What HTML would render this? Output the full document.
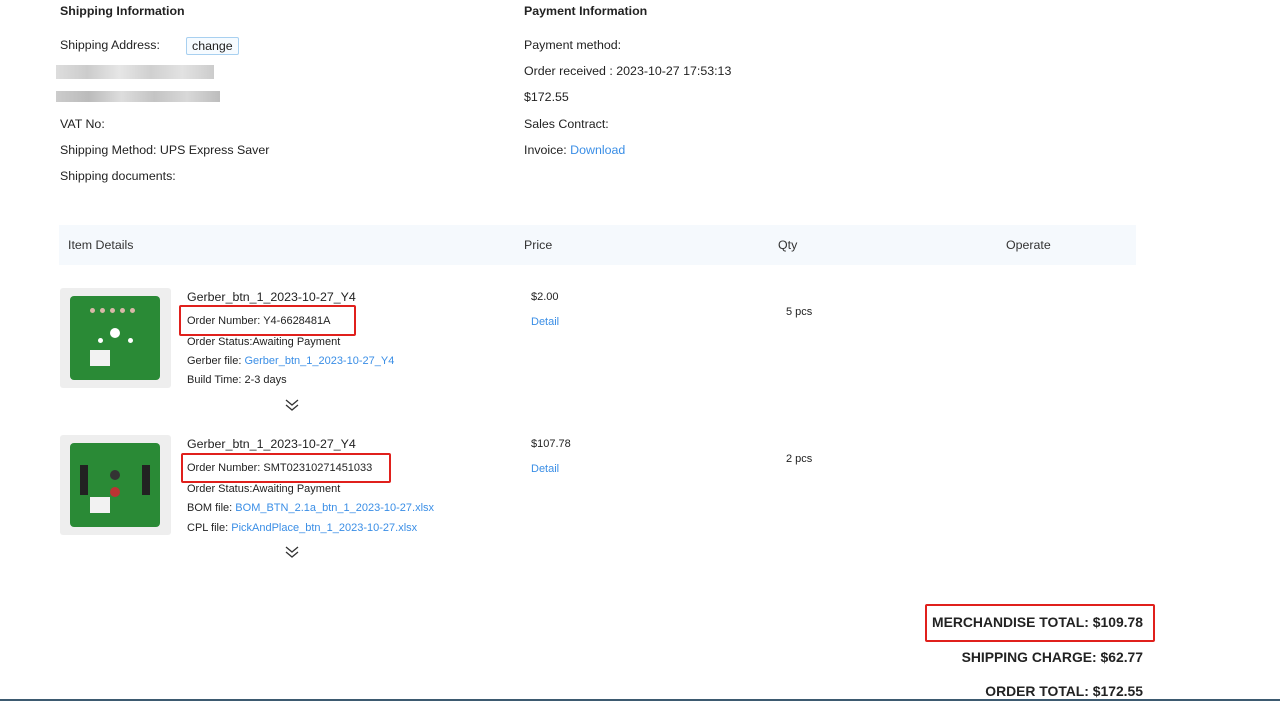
<!DOCTYPE html>
<html><head><meta charset="utf-8"><style>
body{margin:0;width:1280px;height:701px;background:#fff;font-family:"Liberation Sans",sans-serif;color:#222;position:relative;overflow:hidden}
.a{position:absolute;white-space:nowrap}
.t{font-size:12.4px}
.s{font-size:11px}
.b{font-weight:bold}
.l{color:#3a8ee6}
.box{position:absolute;border:2px solid #e0201c;border-radius:2px}
.pcb{position:absolute;width:111px;height:100px;background:#eee;border-radius:3px}
.pcb .g{position:absolute;left:10px;top:8px;width:90px;height:84px;background:#2a8a36;border-radius:4px}
.pcb .d{position:absolute;width:5px;height:5px;border-radius:50%;background:#d9b8a8}
.pcb .w{position:absolute;left:30px;top:62px;width:20px;height:16px;background:#f2f2f2}
.chev{position:absolute;width:14px;height:14px}
</style></head><body>
<div class="a t b" style="left:60px;top:4px">Shipping Information</div>
<div class="a t b" style="left:524px;top:4px">Payment Information</div>
<div class="a t" style="left:60px;top:38px">Shipping Address:</div>
<div class="a t" style="left:186px;top:37px;border:1px solid #a8d0f0;border-radius:2px;padding:1px 5px;background:#f6fbff">change</div>
<div class="a" style="left:56px;top:65px;width:158px;height:14px;background:linear-gradient(90deg,#ddd,#ccc,#e6e6e6,#d0d0d0,#e2e2e2,#ccc)"></div>
<div class="a" style="left:56px;top:91px;width:164px;height:11px;background:linear-gradient(90deg,#ccc,#bbb,#ddd,#c4c4c4,#d8d8d8,#bdbdbd)"></div>
<div class="a t" style="left:60px;top:117px">VAT No:</div>
<div class="a t" style="left:60px;top:143px">Shipping Method: UPS Express Saver</div>
<div class="a t" style="left:60px;top:169px">Shipping documents:</div>
<div class="a t" style="left:524px;top:38px">Payment method:</div>
<div class="a t" style="left:524px;top:64px">Order received : 2023-10-27 17:53:13</div>
<div class="a t" style="left:524px;top:90px">$172.55</div>
<div class="a t" style="left:524px;top:117px">Sales Contract:</div>
<div class="a t" style="left:524px;top:143px">Invoice: <span class="l">Download</span></div>

<div class="a" style="left:59px;top:225px;width:1077px;height:40px;background:#f5f9fd"></div>
<div class="a t" style="left:68px;top:238px;color:#333">Item Details</div>
<div class="a t" style="left:524px;top:238px;color:#333">Price</div>
<div class="a t" style="left:778px;top:238px;color:#333">Qty</div>
<div class="a t" style="left:1006px;top:238px;color:#333">Operate</div>

<div class="pcb" style="left:60px;top:288px"><div class="g"></div><div class="w"></div>
<div class="d" style="left:30px;top:20px"></div><div class="d" style="left:40px;top:20px"></div><div class="d" style="left:50px;top:20px"></div><div class="d" style="left:60px;top:20px"></div><div class="d" style="left:70px;top:20px"></div>
<div class="d" style="left:50px;top:40px;width:10px;height:10px;background:#fff"></div><div class="d" style="left:38px;top:50px;background:#fff"></div><div class="d" style="left:68px;top:50px;background:#fff"></div></div>
<div class="a t" style="left:187px;top:290px">Gerber_btn_1_2023-10-27_Y4</div>
<div class="box" style="left:179px;top:305px;width:173px;height:27px"></div>
<div class="a s" style="left:187px;top:315px">Order Number: Y4-6628481A</div>
<div class="a s" style="left:187px;top:336px">Order Status:Awaiting Payment</div>
<div class="a s" style="left:187px;top:355px">Gerber file: <span class="l">Gerber_btn_1_2023-10-27_Y4</span></div>
<div class="a s" style="left:187px;top:374px">Build Time: 2-3 days</div>
<svg class="chev" style="left:285px;top:398px" viewBox="0 0 14 14"><path d="M1 2l6 5 6-5M1 7l6 5 6-5" fill="none" stroke="#333" stroke-width="1.3"/></svg>
<div class="a s" style="left:531px;top:291px">$2.00</div>
<div class="a s l" style="left:531px;top:316px">Detail</div>
<div class="a s" style="left:786px;top:306px">5 pcs</div>

<div class="pcb" style="left:60px;top:435px"><div class="g"></div><div class="w"></div>
<div class="d" style="left:50px;top:35px;width:10px;height:10px;background:#333"></div><div class="d" style="left:50px;top:52px;width:10px;height:10px;background:#b33"></div>
<div class="a" style="left:20px;top:30px;width:8px;height:30px;background:#222"></div><div class="a" style="left:82px;top:30px;width:8px;height:30px;background:#222"></div></div>
<div class="a t" style="left:187px;top:437px">Gerber_btn_1_2023-10-27_Y4</div>
<div class="box" style="left:181px;top:453px;width:206px;height:26px"></div>
<div class="a s" style="left:187px;top:462px">Order Number: SMT02310271451033</div>
<div class="a s" style="left:187px;top:483px">Order Status:Awaiting Payment</div>
<div class="a s" style="left:187px;top:502px">BOM file: <span class="l">BOM_BTN_2.1a_btn_1_2023-10-27.xlsx</span></div>
<div class="a s" style="left:187px;top:522px">CPL file: <span class="l">PickAndPlace_btn_1_2023-10-27.xlsx</span></div>
<svg class="chev" style="left:285px;top:545px" viewBox="0 0 14 14"><path d="M1 2l6 5 6-5M1 7l6 5 6-5" fill="none" stroke="#333" stroke-width="1.3"/></svg>
<div class="a s" style="left:531px;top:438px">$107.78</div>
<div class="a s l" style="left:531px;top:463px">Detail</div>
<div class="a s" style="left:786px;top:453px">2 pcs</div>

<div class="box" style="left:925px;top:604px;width:226px;height:34px"></div>
<div class="a b" style="right:137px;top:614px;font-size:13.9px">MERCHANDISE TOTAL: $109.78</div>
<div class="a b" style="right:137px;top:649px;font-size:13.9px">SHIPPING CHARGE: $62.77</div>
<div class="a b" style="right:137px;top:683px;font-size:13.9px">ORDER TOTAL: $172.55</div>
<div class="a" style="left:0;top:699px;width:1280px;height:2px;background:#3d5a70"></div>
</body></html>
